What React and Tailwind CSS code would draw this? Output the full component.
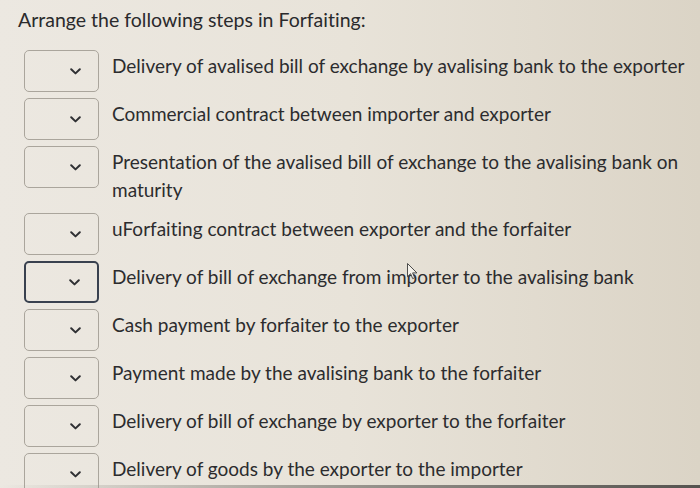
import React from 'react';

const STEPS = [
  'Delivery of avalised bill of exchange by avalising bank to the exporter',
  'Commercial contract between importer and exporter',
  'Presentation of the avalised bill of exchange to the avalising bank on maturity',
  'uForfaiting contract between exporter and the forfaiter',
  'Delivery of bill of exchange from importer to the avalising bank',
  'Cash payment by forfaiter to the exporter',
  'Payment made by the avalising bank to the forfaiter',
  'Delivery of bill of exchange by exporter to the forfaiter',
  'Delivery of goods by the exporter to the importer',
];

function Chevron() {
  return (
    <svg width="11" height="7" viewBox="0 0 11 7" fill="none">
      <path d="M1.2 1.2 5.5 5.4 9.8 1.2" stroke="#2f3033" strokeWidth="2" strokeLinecap="round" strokeLinejoin="round" />
    </svg>
  );
}

function Pointer() {
  return (
    <svg className="absolute left-[0px] top-[-2px]" width="11" height="17" viewBox="0 0 11 17">
      <path d="M0.5 0.5v13.2l3.1-3 2.1 4.9 2-0.9-2.1-4.8h4.3z" fill="#f4f1ea" stroke="#3a3a3a" strokeWidth="0.9" strokeLinejoin="round" />
    </svg>
  );
}

function Label({ text }) {
  // the mouse pointer sits over "importer" in the fifth step
  if (text.includes('from importer')) {
    const [a, b] = text.split('from importer');
    return (
      <>
        {a}from im<span className="relative"><Pointer /></span>porter{b}
      </>
    );
  }
  return text;
}

function Row({ text, focused }) {
  return (
    <div className="flex items-start">
      <div
        className={
          'flex h-[42px] w-[75px] shrink-0 items-center justify-end pr-[17px] rounded-[5px] ' +
          (focused ? 'border-2 border-[#39414f]' : 'border border-[#aaa59c]')
        }
      >
        <Chevron />
      </div>
      <p className="ml-[13px] pt-[2px] pb-[3px] pr-[8px] text-[19px] leading-[28px] text-[#2c2c2e]">
        <Label text={text} />
      </p>
    </div>
  );
}

export default function App() {
  return (
    <div className="relative h-[488px] w-[700px] overflow-hidden bg-gradient-to-r from-[#ece8e1] via-[#e8e3d9] to-[#dbd4c6] font-['Lato',sans-serif] [font-variant-ligatures:no-common-ligatures]">
      <h1 className="pl-[18px] pt-[6px] text-[19.5px] leading-[28px] text-[#2a2a2c]">
        Arrange the following steps in Forfaiting:
      </h1>
      <div className="mt-[16px] flex flex-col gap-[6px] pl-[24px]">
        {STEPS.map((s, i) => (
          <Row key={i} text={s} focused={i === 4} />
        ))}
      </div>
      <div className="absolute bottom-0 left-0 h-[3px] w-full bg-gradient-to-r from-transparent via-[#9a968f] to-[#55534f]" />
    </div>
  );
}
